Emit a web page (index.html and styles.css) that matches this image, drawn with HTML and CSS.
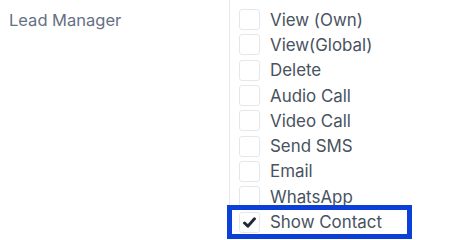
FILE: index.html
```html
<!DOCTYPE html>
<html>
<head>
<meta charset="utf-8">
<link rel="stylesheet" href="styles.css">
</head>
<body>
<div class="perm">
  <div class="module">Lead Manager</div>
  <ul class="opts">
    <li class="opt"><span class="box"></span>View (Own)</li>
    <li class="opt"><span class="box"></span>View(Global)</li>
    <li class="opt"><span class="box"></span>Delete</li>
    <li class="opt"><span class="box"></span>Audio Call</li>
    <li class="opt"><span class="box"></span>Video Call</li>
    <li class="opt"><span class="box"></span>Send SMS</li>
    <li class="opt"><span class="box"></span>Email</li>
    <li class="opt"><span class="box"></span>WhatsApp</li>
    <li class="opt"><span class="box checked"><svg viewBox="0 0 14 12" width="13" height="11"><path d="M1.6 6.6 L5.2 10 L12.4 2" fill="none" stroke="#1f2937" stroke-width="3.2" stroke-linecap="round" stroke-linejoin="round"/></svg></span>Show Contact</li>
  </ul>
  <div class="highlight"></div>
</div>
</body>
</html>
```

FILE: styles.css
```css
html, body {
  margin: 0;
  padding: 0;
  background: #ffffff;
  height: 239px;
  overflow: hidden;
}
body {
  font-family: Inter, "Noto Sans", sans-serif;
}
.perm {
  position: relative;
  display: grid;
  grid-template-columns: 230px 1fr;
  height: 239px;
}
.module {
  border-right: 1px solid #e6e8ec;
  padding: 9px 0 0 9px;
  font-size: 16.5px;
  line-height: 22px;
  color: #667085;
}
.opts {
  list-style: none;
  margin: 0;
  padding: 7px 0 0 9px;
}
.opt {
  display: flex;
  align-items: center;
  height: 25.3px;
  font-size: 16.9px;
  color: #485260;
}
.box {
  box-sizing: border-box;
  width: 21px;
  height: 21px;
  border: 1px solid #e5e7eb;
  border-radius: 3px;
  margin-right: 10px;
  display: flex;
  align-items: center;
  justify-content: center;
  flex: none;
}
.highlight {
  position: absolute;
  left: 227px;
  top: 205px;
  width: 185px;
  height: 34px;
  box-sizing: border-box;
  border: 5px solid #0b3fd8;
}
```
